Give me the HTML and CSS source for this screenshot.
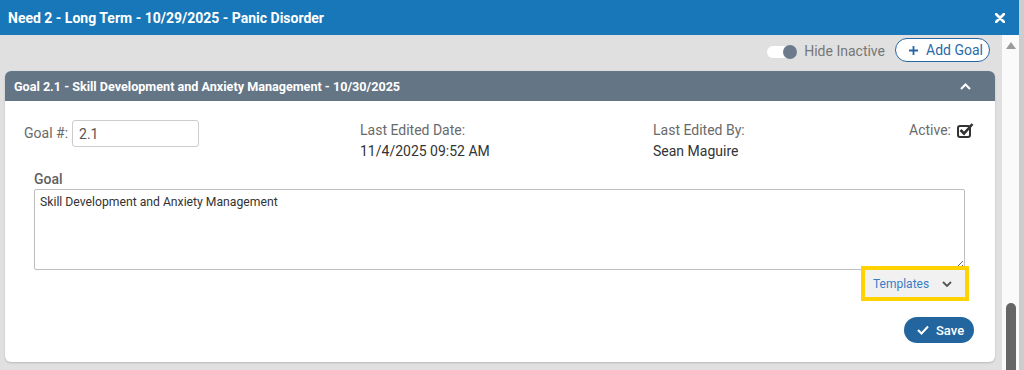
FILE: index.html
```html
<!DOCTYPE html>
<html>
<head>
<meta charset="utf-8">
<link rel="stylesheet" href="styles.css">
</head>
<body>
<div class="dialog">
  <div class="dlg-header">
    <span class="dlg-title">Need 2 - Long Term - 10/29/2025 - Panic Disorder</span>
    <button class="close" aria-label="Close">
      <svg width="10" height="10" viewBox="0 0 10 10"><path d="M1 1 L9 9 M9 1 L1 9" stroke="#fff" stroke-width="2.6" stroke-linecap="round"/></svg>
    </button>
  </div>
  <div class="dlg-main">
    <div class="dlg-content">
      <div class="toolbar">
        <span class="toggle"><span class="knob"></span></span>
        <span class="toggle-label">Hide Inactive</span>
        <button class="add-goal">
          <svg width="9" height="9" viewBox="0 0 9 9"><path d="M4.5 0 V9 M0 4.5 H9" stroke="#2466a6" stroke-width="1.8"/></svg>
          <span>Add Goal</span>
        </button>
      </div>
      <div class="card">
        <div class="card-header">
          <span class="card-title">Goal 2.1 - Skill Development and Anxiety Management - 10/30/2025</span>
          <svg class="chev-up" width="11" height="7" viewBox="0 0 11 7"><path d="M1 6 L5.5 1.5 L10 6" fill="none" stroke="#fff" stroke-width="2"/></svg>
        </div>
        <div class="card-body">
          <div class="fields">
            <div class="field-inline">
              <span class="lbl">Goal #:</span>
              <input class="goal-num" type="text" value="2.1">
            </div>
            <div class="field-stack">
              <span class="lbl">Last Edited Date:</span>
              <span class="val">11/4/2025 09:52 AM</span>
            </div>
            <div class="field-stack">
              <span class="lbl">Last Edited By:</span>
              <span class="val">Sean Maguire</span>
            </div>
            <div class="field-active">
              <span class="lbl">Active:</span>
              <svg width="17" height="16" viewBox="0 0 17 16"><rect x="1" y="4" width="12" height="11" rx="2" fill="none" stroke="#333" stroke-width="2"/><path d="M3.5 8 L7 11.5 L15.5 2" fill="none" stroke="#333" stroke-width="2.6"/></svg>
            </div>
          </div>
          <div class="goal-section">
            <label class="goal-label">Goal</label>
            <textarea class="goal-text">Skill Development and Anxiety Management</textarea>
            <div class="templates-row">
              <button class="templates">
                <span>Templates</span>
                <svg width="10" height="6" viewBox="0 0 10 6"><path d="M1 1 L5 5 L9 1" fill="none" stroke="#555" stroke-width="1.8"/></svg>
              </button>
            </div>
          </div>
          <div class="save-row">
            <button class="save">
              <svg width="12" height="10" viewBox="0 0 12 10"><path d="M1 5 L4.5 8.5 L11 1.5" fill="none" stroke="#fff" stroke-width="2"/></svg>
              <span>Save</span>
            </button>
          </div>
        </div>
      </div>
    </div>
    <div class="scrollbar">
      <span class="sb-arrow"></span>
      <span class="sb-thumb"></span>
    </div>
  </div>
</div>
</body>
</html>
```

FILE: styles.css
```css
* { box-sizing: border-box; }
body {
  margin: 0;
  width: 1024px;
  height: 370px;
  overflow: hidden;
  background: #cdcdcd;
  font-family: Roboto, "Noto Sans", "Liberation Sans", sans-serif;
}
button { font-family: inherit; cursor: pointer; }

.dialog {
  width: 1019px;
  height: 370px;
  display: flex;
  flex-direction: column;
}
.dlg-header {
  height: 35px;
  flex: none;
  background: #1877b8;
  color: #fff;
  display: flex;
  align-items: center;
  justify-content: space-between;
  padding: 0 14px 0 8px;
}
.dlg-title { font-size: 14px; font-weight: 700; }
.close {
  background: none;
  border: 0;
  padding: 0;
  width: 10px;
  height: 10px;
  display: flex;
}

.dlg-main { flex: 1; display: flex; min-height: 0; }
.dlg-content { width: 1002px; background: #e0e0e0; }

.toolbar {
  height: 36px;
  display: flex;
  align-items: center;
  justify-content: flex-end;
  padding: 0 12px 6px 0;
}
.toggle {
  width: 30px;
  height: 12px;
  border-radius: 6px;
  background: #fff;
  display: flex;
  align-items: center;
  justify-content: flex-end;
  margin: 3px 7px 0 0;
}
.knob {
  width: 14px;
  height: 14px;
  border-radius: 50%;
  background: #6b7b8b;
}
.toggle-label {
  font-size: 14px;
  color: #777;
  margin-right: 10px;
  padding-top: 1px;
}
.add-goal {
  height: 24px;
  width: 95px;
  border: 1px solid #2466a6;
  border-radius: 12px;
  background: #fff;
  color: #2a6aa8;
  font-size: 14px;
  display: flex;
  align-items: center;
  gap: 8px;
  padding: 0 0 0 13px;
}

.card {
  margin: 0 7px 0 5px;
  background: #fff;
  border-radius: 6px;
  box-shadow: 0 1px 2px rgba(0,0,0,0.18);
}
.card-header {
  height: 30px;
  background: #647585;
  border-radius: 6px 6px 0 0;
  display: flex;
  align-items: center;
  justify-content: space-between;
  padding: 0 24px 0 9px;
  color: #fff;
}
.card-title { font-size: 12.6px; font-weight: 700; }

.card-body { padding: 19px 21px 19px 19px; }

.fields {
  display: grid;
  grid-template-columns: 336px 293px 1fr auto;
  height: 42px;
}
.lbl { font-size: 14px; color: #6a6a6a; line-height: 21px; }
.val { font-size: 14px; color: #333; line-height: 21px; }
.field-inline {
  display: flex;
  align-items: flex-start;
  gap: 4px;
}
.field-inline .lbl { padding-top: 3px; }
.goal-num {
  width: 127px;
  height: 27px;
  border: 1px solid #ccc;
  border-radius: 3px;
  padding: 0 6px;
  font-family: inherit;
  font-size: 14px;
  color: #555;
}
.field-stack { display: flex; flex-direction: column; }
.field-active {
  display: flex;
  align-items: flex-start;
  gap: 6px;
}
.field-active svg { margin-top: 2px; }

.goal-section {
  margin-top: 8px;
  padding: 0 9px 0 10px;
}
.goal-label {
  display: block;
  font-size: 14px;
  font-weight: 500;
  color: #5f5f5f;
  line-height: 18px;
}
.goal-text {
  display: block;
  width: 100%;
  height: 81px;
  margin-top: 1px;
  border: 1px solid #bdbdbd;
  border-radius: 2px;
  padding: 5px;
  font-family: inherit;
  font-size: 12.2px;
  color: #333;
  resize: vertical;
}
.templates-row { display: flex; justify-content: flex-end; }
.templates {
  width: 100px;
  height: 27px;
  border: 0;
  background: #f1f1f1;
  outline: 4px solid #ffd200;
  color: #3b7cc6;
  font-size: 12px;
  display: flex;
  align-items: center;
  justify-content: space-between;
  padding: 0 13px 0 8px;
}

.save-row {
  display: flex;
  justify-content: flex-end;
  margin-top: 20px;
}
.save {
  width: 70px;
  height: 26px;
  border: 0;
  border-radius: 13px;
  background: #23669f;
  color: #fff;
  font-size: 13px;
  font-weight: 500;
  display: flex;
  align-items: center;
  gap: 7px;
  padding: 0 0 0 13px;
}

.scrollbar {
  width: 17px;
  background: #fafafa;
  display: flex;
  flex-direction: column;
  align-items: center;
  justify-content: space-between;
}
.sb-arrow {
  margin-top: 7px;
  width: 0;
  height: 0;
  border-left: 5px solid transparent;
  border-right: 5px solid transparent;
  border-bottom: 7px solid #9a9a9a;
}
.sb-thumb {
  width: 10px;
  height: 67px;
  background: #666;
  border-radius: 5px 5px 0 0;
}
```
